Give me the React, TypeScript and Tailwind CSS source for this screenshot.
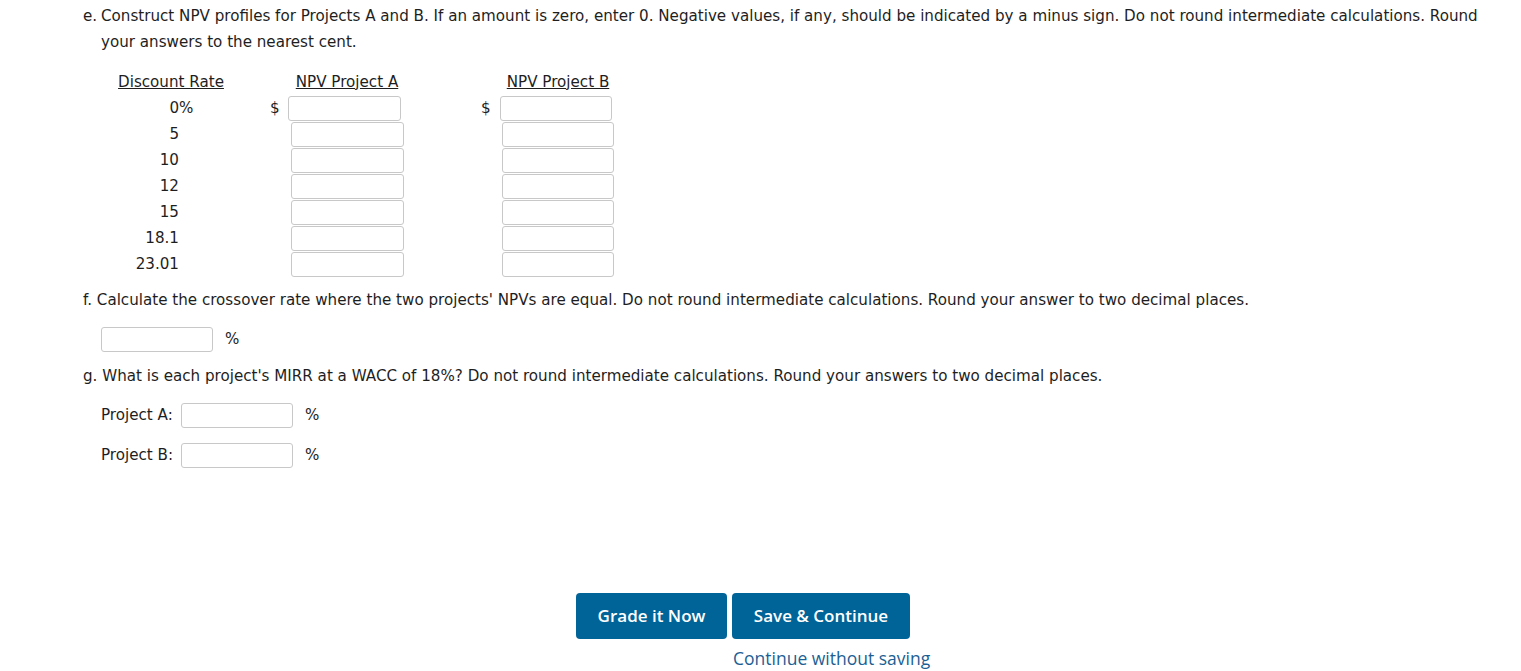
import React from "react";

const inputCls =
  "h-[25px] rounded-[3px] border border-[#c8c8c8] bg-white shrink-0";

function Rate({ rate }: { rate: string }) {
  const hasPct = rate.endsWith("%");
  const num = hasPct ? rate.slice(0, -1) : rate;
  return (
    <div className="relative w-[78px] shrink-0 text-right">
      {num}
      {hasPct && <span className="absolute left-full">%</span>}
    </div>
  );
}

export default function App() {
  const rates = ["5", "10", "12", "15", "18.1", "23.01"];
  return (
    <div
      className="relative h-[671px] w-[1521px] bg-white text-[15.13px] text-[#1e1e1e]"
      style={{ fontFamily: '"DejaVu Sans", Verdana, sans-serif' }}
    >
      <div className="pl-[83px] pt-[3px] pr-[21px]">
        <div className="flex leading-[26px]">
          <span className="w-[18px] shrink-0">e.</span>
          <span>
            Construct NPV profiles for Projects A and B. If an amount is zero,
            enter 0. Negative values, if any, should be indicated by a minus
            sign. Do not round intermediate calculations. Round your answers to
            the nearest cent.
          </span>
        </div>

        <div className="mt-[14px] pl-[18px]">
          <div className="flex h-[26px] items-center">
            <div className="w-[140px] text-center">
              <span className="underline">Discount Rate</span>
            </div>
            <div className="w-[212px] text-center">
              <span className="underline">NPV Project A</span>
            </div>
            <div className="w-[210px] text-center">
              <span className="underline">NPV Project B</span>
            </div>
          </div>

          <div className="flex h-[26px] items-center">
            <Rate rate="0%" />
            <div className="w-[91px] shrink-0" />
            <div className="w-[18px] shrink-0">$</div>
            <div className={inputCls + " w-[113px]"} />
            <div className="w-[80px] shrink-0" />
            <div className="w-[19px] shrink-0">$</div>
            <div className={inputCls + " w-[112px]"} />
          </div>

          {rates.map((r) => (
            <div key={r} className="flex h-[26px] items-center">
              <Rate rate={r} />
              <div className="w-[112px] shrink-0" />
              <div className={inputCls + " w-[113px]"} />
              <div className="w-[98px] shrink-0" />
              <div className={inputCls + " w-[112px]"} />
            </div>
          ))}
        </div>

        <div className="mt-[10px] leading-[26px]">
          f. Calculate the crossover rate where the two projects' NPVs are
          equal. Do not round intermediate calculations. Round your answer to
          two decimal places.
        </div>
        <div className="mt-[14px] flex items-center pl-[18px]">
          <div className={inputCls + " w-[112px]"} />
          <span className="ml-[12px]">%</span>
        </div>

        <div className="mt-[11px] leading-[26px]">
          g. What is each project's MIRR at a WACC of 18%? Do not round
          intermediate calculations. Round your answers to two decimal places.
        </div>
        <div className="mt-[14px] flex items-center pl-[18px]">
          <span className="w-[80px] shrink-0">Project A:</span>
          <div className={inputCls + " w-[112px]"} />
          <span className="ml-[12px]">%</span>
        </div>
        <div className="mt-[15px] flex items-center pl-[18px]">
          <span className="w-[80px] shrink-0">Project B:</span>
          <div className={inputCls + " w-[112px]"} />
          <span className="ml-[12px]">%</span>
        </div>
      </div>

      <div
        className="mt-[125px] flex flex-col items-start pl-[576px]"
        style={{ fontFamily: '"Open Sans", sans-serif' }}
      >
        <div className="flex gap-[5px]">
          <button className="h-[46px] w-[151px] rounded-[4px] bg-[#006499] text-[17px] font-semibold text-white">
            Grade it Now
          </button>
          <button className="h-[46px] w-[178px] rounded-[4px] bg-[#006499] text-[17px] font-semibold text-white">
            Save &amp; Continue
          </button>
        </div>
        <div className="ml-[157px] mt-[7px] text-[17.5px] leading-[24px] text-[#1c5f94]">
          Continue without saving
        </div>
      </div>
    </div>
  );
}
